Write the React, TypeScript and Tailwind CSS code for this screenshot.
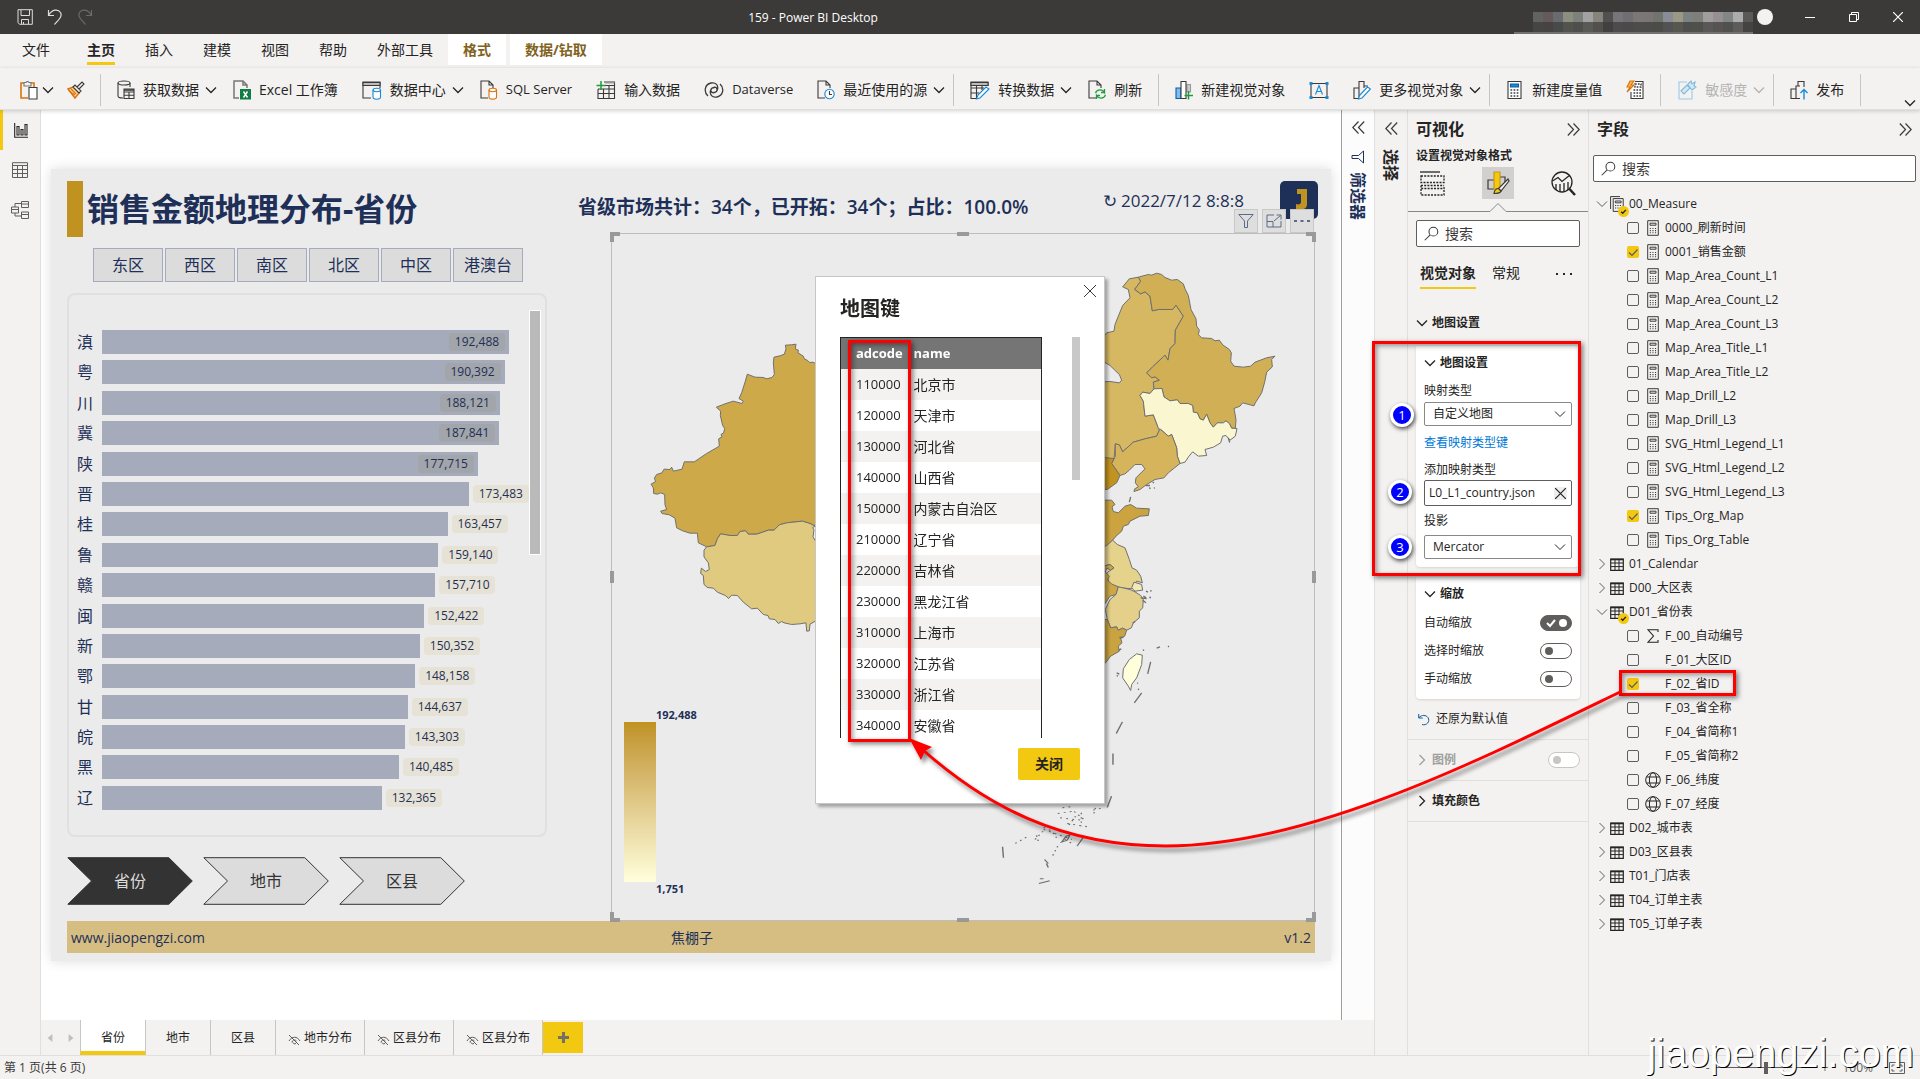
import { useState } from 'react';
import type { ReactNode } from 'react';
import clsx from 'clsx';

/* ---------- data ---------- */

const menuItems = ['插入', '建模', '视图', '帮助', '外部工具'];
const regions = ['东区', '西区', '南区', '北区', '中区', '港澳台'];

const provinces: [string, number][] = [
  ['滇', 192488],
  ['粤', 190392],
  ['川', 188121],
  ['冀', 187841],
  ['陕', 177715],
  ['晋', 173483],
  ['桂', 163457],
  ['鲁', 159140],
  ['赣', 157710],
  ['闽', 152422],
  ['新', 150352],
  ['鄂', 148158],
  ['甘', 144637],
  ['皖', 143303],
  ['黑', 140485],
  ['辽', 132365],
];

const mapKeys = [
  ['110000', '北京市'],
  ['120000', '天津市'],
  ['130000', '河北省'],
  ['140000', '山西省'],
  ['150000', '内蒙古自治区'],
  ['210000', '辽宁省'],
  ['220000', '吉林省'],
  ['230000', '黑龙江省'],
  ['310000', '上海市'],
  ['320000', '江苏省'],
  ['330000', '浙江省'],
  ['340000', '安徽省'],
];

type FieldIcon = 'calc' | 'sum' | 'globe' | 'none';

interface Field {
  name: string;
  icon: FieldIcon;
  checked?: boolean;
  highlighted?: boolean;
}

interface FieldTable {
  name: string;
  measure?: boolean;
  open?: boolean;
  fields?: Field[];
}

const tables: FieldTable[] = [
  {
    name: '00_Measure',
    measure: true,
    open: true,
    fields: [
      { name: '0000_刷新时间', icon: 'calc' },
      { name: '0001_销售金额', icon: 'calc', checked: true },
      { name: 'Map_Area_Count_L1', icon: 'calc' },
      { name: 'Map_Area_Count_L2', icon: 'calc' },
      { name: 'Map_Area_Count_L3', icon: 'calc' },
      { name: 'Map_Area_Title_L1', icon: 'calc' },
      { name: 'Map_Area_Title_L2', icon: 'calc' },
      { name: 'Map_Drill_L2', icon: 'calc' },
      { name: 'Map_Drill_L3', icon: 'calc' },
      { name: 'SVG_Html_Legend_L1', icon: 'calc' },
      { name: 'SVG_Html_Legend_L2', icon: 'calc' },
      { name: 'SVG_Html_Legend_L3', icon: 'calc' },
      { name: 'Tips_Org_Map', icon: 'calc', checked: true },
      { name: 'Tips_Org_Table', icon: 'calc' },
    ],
  },
  { name: '01_Calendar' },
  { name: 'D00_大区表' },
  {
    name: 'D01_省份表',
    open: true,
    fields: [
      { name: 'F_00_自动编号', icon: 'sum' },
      { name: 'F_01_大区ID', icon: 'none' },
      { name: 'F_02_省ID', icon: 'none', checked: true, highlighted: true },
      { name: 'F_03_省全称', icon: 'none' },
      { name: 'F_04_省简称1', icon: 'none' },
      { name: 'F_05_省简称2', icon: 'none' },
      { name: 'F_06_纬度', icon: 'globe' },
      { name: 'F_07_经度', icon: 'globe' },
    ],
  },
  { name: 'D02_城市表' },
  { name: 'D03_区县表' },
  { name: 'T01_门店表' },
  { name: 'T04_订单主表' },
  { name: 'T05_订单子表' },
];

/* ---------- icons ---------- */

function Chevron({ dir = 'down', thin, className }: { dir?: 'down' | 'right'; thin?: boolean; className?: string }) {
  return (
    <svg viewBox="0 0 12 12" className={clsx('h-3 w-3 shrink-0', className)} fill="none" stroke="currentColor" strokeWidth={thin ? 1 : 1.3}>
      {dir === 'down' ? <path d="M1 3.5 6 8.5 11 3.5" /> : <path d="M3.5 1 8.5 6 3.5 11" />}
    </svg>
  );
}

function DoubleChevron({ left }: { left?: boolean }) {
  return (
    <svg viewBox="0 0 13 13" className="h-[13px] w-[13px]" fill="none" stroke="#3b3a39" strokeWidth="1.2">
      {left ? <path d="M6.5.5.8 6.5l5.7 6M12.2.5l-5.7 6 5.7 6" /> : <path d="M.8.5l5.7 6-5.7 6M6.5.5l5.7 6-5.7 6" />}
    </svg>
  );
}

function SearchIcon() {
  return (
    <svg viewBox="0 0 16 16" className="h-[15px] w-[15px] shrink-0" fill="none" stroke="#3b3a39" strokeWidth="1.1">
      <circle cx="10" cy="6" r="4.7" />
      <path d="M6.6 9.4.8 15.2" />
    </svg>
  );
}

function CalcIcon() {
  return (
    <svg viewBox="0 0 12 16" className="h-4 w-3" fill="none" stroke="#3b3a39">
      <path d="M.7.7h10.6v14.6H.7z" />
      <path d="M3 3.2h6v2H3z" />
      <path d="M2.8 8.5h6.8M2.8 10.6h6.8M2.8 12.7h6.8" strokeWidth="1.1" strokeDasharray="1.1 1.5" />
    </svg>
  );
}

function TableIcon() {
  return (
    <svg viewBox="0 0 14 13" className="h-[13px] w-[14px]" fill="none" stroke="#252423">
      <path d="M.7 1h12.6v11.3H.7z" strokeWidth="1.2" />
      <path d="M.5 1.5h13" strokeWidth="1.6" />
      <path d="M1 5h12M1 8.6h12M5 2v10M9 2v10" />
    </svg>
  );
}

function MeasureTableIcon() {
  return (
    <svg viewBox="0 0 14 16" className="h-4 w-[14px]" fill="none" stroke="#3b3a39">
      <path d="M.6 13V.6H10" />
      <path d="M3.2 2.6h10v12.8h-10z" fill="#f3f2f1" />
      <path d="M5.3 5h5.8v1.8H5.3z" />
      <path d="M5 9.5h6.5M5 12h6.5" strokeDasharray="1.2 1.2" />
    </svg>
  );
}

function CheckBadge() {
  return (
    <svg viewBox="0 0 12 12" className="absolute -right-[5px] -bottom-[5px] h-[11px] w-[11px]">
      <circle cx="6" cy="6" r="6" fill="#f2c811" />
      <path d="M3.4 6.2 5.2 8l3.4-3.8" fill="none" stroke="#252423" strokeWidth="1.5" />
    </svg>
  );
}

function GlobeIcon() {
  return (
    <svg viewBox="0 0 16 16" className="h-4 w-4" fill="none" stroke="#252423">
      <circle cx="8" cy="8" r="7.3" />
      <ellipse cx="8" cy="8" rx="3.6" ry="7.3" />
      <path d="M1.5 5h13M1.5 11h13" />
    </svg>
  );
}

function SumIcon() {
  return (
    <svg viewBox="0 0 12 14" className="h-[14px] w-3" fill="none" stroke="#252423" strokeWidth="1.1">
      <path d="M11 3V.8H1l5.5 6.2L1 13.2h10V11" />
    </svg>
  );
}

function Glyph({ children, wide }: { children: ReactNode; wide?: boolean }) {
  return (
    <svg viewBox={wide ? '0 0 20 20' : '0 0 18 20'} className={clsx('h-5 shrink-0', wide ? 'w-5' : 'w-[18px]')} fill="none" stroke="#3b3a39" strokeWidth="1.1">
      {children}
    </svg>
  );
}

const pageOutline = <path d="M8 18H1V1h8l4 4v3M9 1v4h4" />;

const icons = {
  paste: (
    <Glyph>
      <path d="M4 3H1v15h7M10 3h4v4" stroke="#d9730d" strokeWidth="1.6" />
      <path d="M4 2.5h2a1.6 1.6 0 0 1 3 0h2V6H4z" stroke="#777" fill="#f3f2f1" />
      <path d="M9 7.5h8V19H9z" fill="#fff" />
    </Glyph>
  ),
  brush: (
    <Glyph wide>
      <path d="m2 9 5-2 6 6-4 5z" fill="#ffd59a" stroke="#d9730d" strokeWidth="1.4" />
      <path d="m3 11 6 4M5 9l5 5" stroke="#d9730d" />
      <path d="m7 7 2-2 6 6-2 2zM11 7l5-5 2 2-5 5" fill="#f3f2f1" />
    </Glyph>
  ),
  getData: (
    <Glyph>
      <ellipse cx="7" cy="3" rx="6" ry="2" />
      <path d="M1 3v13c0 1 2 2 5 2M13 3v4" />
      <path d="M7 9h10v9.5H7zM7 12h10M7 15.2h10M12 12v6.5" />
      <path d="M7 10h10" strokeWidth="1.6" />
    </Glyph>
  ),
  excel: (
    <Glyph>
      <path d="M6 18H1V1h9l4 4v3M10 1v4h4" stroke="#777" strokeWidth="1.5" />
      <path d="M7 9h11v10.5H7z" fill="#107c41" stroke="none" />
      <path d="m10.5 11.5 4 6M14.5 11.5l-4 6" stroke="#fff" strokeWidth="1.4" />
    </Glyph>
  ),
  dataHub: (
    <Glyph wide>
      <path d="M9 18H1V2h17v6" />
      <path d="M1 2.5h17v3H1z" fill="#bbb" />
      <path d="M11 10v7c0 3 7.5 3 7.5 0v-7" fill="#fff" stroke="#1a8ad4" />
      <ellipse cx="14.8" cy="10" rx="3.7" ry="1.7" fill="#fff" stroke="#1a8ad4" />
    </Glyph>
  ),
  sql: (
    <Glyph>
      {pageOutline}
      <path d="M9 10v7c0 2.8 7.5 2.8 7.5 0v-7" fill="#fff" stroke="#d9730d" />
      <ellipse cx="12.8" cy="10" rx="3.7" ry="1.7" fill="#fff" stroke="#d9730d" />
    </Glyph>
  ),
  enterData: (
    <Glyph wide>
      <path d="M8 2h10.5v16.5H2V9M2 9h16.5M2 13.5h16.5M7.5 9v9.5M13 6v12.5M8 5.5h10.5" />
      <path d="M9 2.5h9.5" stroke="#999" strokeWidth="2" />
      <path d="M5 1v9M.5 5.5h9" stroke="#1f9d3c" strokeWidth="1.5" />
    </Glyph>
  ),
  dataverse: (
    <Glyph wide>
      <path
        d="M4 16C-.5 12 .5 4.500 7 3c5-1 7.500 2.500 6.500 6.500-.800 3.500-5.500 4.500-6.500 1.500C6.500 8.500 8.500 7 10.500 8M16 4c4.500 4 3.500 11.500-3 13-5 1-7.500-2.500-6.500-6.500.800-3.500 5.500-4.500 6.500-1.500.5 2.500-1.500 4-3.500 3"
        strokeWidth="1.300"
      />
    </Glyph>
  ),
  recent: (
    <Glyph>
      {pageOutline}
      <circle cx="12.5" cy="14" r="4.7" fill="#fff" stroke="#1a8ad4" />
      <path d="M12.5 11v3.5H15" />
    </Glyph>
  ),
  transform: (
    <Glyph wide>
      <path d="M7 18.5H1V2h17v4M1 8h13M1 13h8M6.5 5v13M12 5v5" />
      <path d="M1 2.5h17v3H1z" fill="#bbb" />
      <path d="m8 15 8-8 3 2-9 9-3.5 1z" fill="#fff" stroke="#1a8ad4" />
    </Glyph>
  ),
  refresh: (
    <Glyph>
      {pageOutline}
      <path d="M7.5 13c1.5-4 7-4 9-.5V9M17.5 15c-1.5 4-7 4-9 .5V19M16.5 12.5H13M8.5 15.5H12" stroke="#1f9d3c" strokeWidth="1.3" />
    </Glyph>
  ),
  newVisual: (
    <Glyph>
      <path d="M1 8h5v10.5H1z" fill="#7fbcf0" stroke="#0a5ea8" />
      <path d="M12 4.5h3.5V12H12z" fill="#ccc" stroke="#999" />
      <path d="M6 1.5h5v17H6z" fill="#fff" />
      <path d="M13.5 11v8.5M9.5 15.5H18" stroke="#1f9d3c" strokeWidth="1.5" />
    </Glyph>
  ),
  textBox: (
    <Glyph wide>
      <path d="M2 3.5h16v14H2z" />
      <path d="M.5 2h3v3h-3zM16.5 2h3v3h-3zM.5 16h3v3h-3zM16.5 16h3v3h-3z" fill="#1a8ad4" stroke="none" />
      <path d="m6.5 14.5 3.5-9 3.5 9M7.8 11.5h4.5" stroke="#1a8ad4" />
    </Glyph>
  ),
  moreVisuals: (
    <Glyph>
      <path d="M6 18.5H1V8h5M6 18V1.5h5V8M11 6h4" />
      <path d="m6.5 15.5 8-8.5 3 2-8.5 9-3.5 1z" fill="#fff" stroke="#1a8ad4" />
    </Glyph>
  ),
  newMeasure: (
    <Glyph>
      <path d="M2 1.5h13v17H2z" fill="#fff" />
      <path d="M4.5 4h8v3h-8z" fill="#1a8ad4" stroke="#0a5ea8" />
      <path d="M4.5 10h8M4.5 13h8M4.5 16h8" strokeWidth="1.7" strokeDasharray="1.7 1.4" />
    </Glyph>
  ),
  quickMeasure: (
    <Glyph>
      <path d="M9 1.5h8v17H5V12" fill="#fff" />
      <path d="M9 4h6v3H9zM7.5 10h8M7.5 13h8M7.5 16h8" strokeWidth="1.4" strokeDasharray="1.7 1.2" />
      <path d="m4 1-3 6h3l-3 5 7-7H5l3-4z" fill="#ffb34d" stroke="#d9730d" />
    </Glyph>
  ),
  sensitivity: (
    <Glyph wide>
      <path d="M10 2H2v17h13v-8" stroke="#9cc9e6" />
      <path d="m4 11 6-6 3 3-6 6zM11 4l3-3 1 3 3-2-1 4 2 1-4 3-4-5z" stroke="#7fb9dc" fill="#d5e8f4" />
    </Glyph>
  ),
  publish: (
    <Glyph>
      <path d="M10 18.5H1V9h5M6 18V6h4M8 6V1.5h6V7" />
      <path d="M14 19.5v-10M10.5 13 14 9.5l3.5 3.5" stroke="#1a8ad4" strokeWidth="1.4" />
    </Glyph>
  ),
};

/* ---------- window chrome ---------- */

const blurColors = [
  'bg-[#5f6462]',
  'bg-[#655a59]',
  'bg-[#686c70]',
  'bg-[#8c8f80]',
  'bg-[#7c827b]',
  'bg-[#a0a3a2]',
  'bg-[#86847b]',
  'bg-[#4f504f]',
  'bg-[#777577]',
  'bg-[#716d74]',
  'bg-[#7b7777]',
  'bg-[#7b7675]',
  'bg-[#71736d]',
  'bg-[#898c95]',
  'bg-[#9a9a84]',
  'bg-[#7c8280]',
  'bg-[#7e7f79]',
  'bg-[#a09d9e]',
  'bg-[#988f93]',
  'bg-[#828686]',
  'bg-[#abacab]',
  'bg-[#5a5959]',
];

function TitleBar() {
  return (
    <header className="flex h-[34px] shrink-0 items-center justify-between bg-[#3b3a38] text-white">
      <div className="flex w-[112px] items-center gap-3.5 pl-[17px]">
        <button aria-label="保存">
          <svg viewBox="0 0 16 16" className="h-4 w-4" fill="none" stroke="#ddd">
            <path d="M1 .7h14.3v14.6H2.5L1 13.5zM4 1v5.5h8.5V1M4.5 15v-4.5h7V15M6.5 13v2" />
          </svg>
        </button>
        <button aria-label="撤消">
          <svg viewBox="0 0 16 16" className="h-4 w-4" fill="none" stroke="#ddd" strokeWidth="1.2">
            <path d="M1.5 1v5.5H7M1.8 6C5 .5 11-.5 13.500 3.500c2 3.500-1 6.500-6 12" />
          </svg>
        </button>
        <button aria-label="恢复">
          <svg viewBox="0 0 16 16" className="h-4 w-4" fill="none" stroke="#6b6a68" strokeWidth="1.2">
            <path d="M14.5 1v5.5H9M14.2 6C11 .5 5-.5 2.500 3.500c-2 3.500 1 6.500 6 12" />
          </svg>
        </button>
      </div>
      <h1 className="pt-0.5 text-[12px]">159 - Power BI Desktop</h1>
      <div className="flex h-full items-center">
        <div className="flex h-full w-[239px] flex-col justify-end border-b-2 border-[#737270] pl-[19px]">
          <div className="flex">
            {blurColors.map((c) => (
              <span key={c} className={clsx('h-2.5 w-2.5', c)} />
            ))}
          </div>
          <div className="flex opacity-30">
            {blurColors.map((c) => (
              <span key={c} className={clsx('h-2.5 w-2.5', c)} />
            ))}
          </div>
        </div>
        <span className="ml-1 h-4 w-4 rounded-full bg-[#f3f2f1]" />
        <div className="flex items-center gap-[34px] pr-[17px] pl-8">
          <button aria-label="最小化" className="h-px w-2.5 bg-white" />
          <button aria-label="还原">
            <svg viewBox="0 0 10 10" className="h-2.5 w-2.5" fill="none" stroke="#fff">
              <path d="M.5 2.5h7v7h-7zM2.5 2.5v-2h7v7h-2" />
            </svg>
          </button>
          <button aria-label="关闭窗口">
            <svg viewBox="0 0 10 10" className="h-2.5 w-2.5" stroke="#fff" strokeWidth="1.2">
              <path d="m0 0 10 10M10 0 0 10" />
            </svg>
          </button>
        </div>
      </div>
    </header>
  );
}

function MenuBar() {
  return (
    <nav className="flex h-[34px] shrink-0 items-start text-[14px] leading-8">
      <button className="ml-[22px]">文件</button>
      <button className="mr-[15px] ml-[37px] h-[31px] border-b-[3px] border-[#f2c811] font-bold">主页</button>
      {menuItems.map((item) => (
        <button key={item} className="px-[15px]">
          {item}
        </button>
      ))}
      <button className="h-[31px] bg-white px-[15px] font-bold text-[#80631d]">格式</button>
      <button className="ml-1 h-[31px] bg-white px-[15px] font-bold text-[#80631d]">数据/钻取</button>
    </nav>
  );
}

interface ToolProps {
  icon: ReactNode;
  label?: string;
  title?: string;
  menu?: boolean;
  disabled?: boolean;
  latin?: boolean;
}

function Tool({ icon, label, title, menu, disabled, latin }: ToolProps) {
  return (
    <button
      aria-label={title}
      disabled={disabled}
      className={clsx('flex shrink-0 items-center', menu ? 'mr-4' : 'mr-6', disabled && 'text-[#b5b3b1]')}
    >
      {icon}
      {label && <span className={clsx('ml-2 whitespace-nowrap', latin ? 'text-[13px]' : 'text-[14px]')}>{label}</span>}
      {menu && <Chevron className="ml-1.5" />}
    </button>
  );
}

function ToolGroup({ children }: { children: ReactNode }) {
  return (
    <div className="flex h-8 items-center border-r border-[#c8c6c4] pl-4">
      <div className="-mr-2 flex items-center">{children}</div>
    </div>
  );
}

function Toolbar() {
  return (
    <div className="z-10 flex h-[42px] shrink-0 items-center overflow-hidden border-b border-[#e1dfdd] pt-0.5 shadow-[0_1px_4px_rgba(0,0,0,0.18)]">
      <div className="flex h-8 items-center border-r border-[#c8c6c4] pr-3.5 pl-5">
        <button aria-label="粘贴" className="flex items-center">
          {icons.paste}
          <Chevron className="ml-1" />
        </button>
        <button aria-label="格式刷" className="ml-3">
          {icons.brush}
        </button>
      </div>
      <ToolGroup>
        <Tool icon={icons.getData} label="获取数据" menu />
        <Tool icon={icons.excel} label="Excel 工作簿" />
        <Tool icon={icons.dataHub} label="数据中心" menu />
        <Tool icon={icons.sql} label="SQL Server" latin />
        <Tool icon={icons.enterData} label="输入数据" />
        <Tool icon={icons.dataverse} label="Dataverse" latin />
        <Tool icon={icons.recent} label="最近使用的源" menu />
      </ToolGroup>
      <ToolGroup>
        <Tool icon={icons.transform} label="转换数据" menu />
        <Tool icon={icons.refresh} label="刷新" />
      </ToolGroup>
      <ToolGroup>
        <Tool icon={icons.newVisual} label="新建视觉对象" />
        <Tool icon={icons.textBox} title="文本框" />
        <Tool icon={icons.moreVisuals} label="更多视觉对象" menu />
      </ToolGroup>
      <ToolGroup>
        <Tool icon={icons.newMeasure} label="新建度量值" />
        <Tool icon={icons.quickMeasure} title="快度量值" />
      </ToolGroup>
      <ToolGroup>
        <Tool icon={icons.sensitivity} label="敏感度" menu disabled />
      </ToolGroup>
      <ToolGroup>
        <Tool icon={icons.publish} label="发布" />
      </ToolGroup>
      <button aria-label="折叠功能区" className="mt-auto mr-1 ml-auto">
        <Chevron />
      </button>
    </div>
  );
}

function ViewRail() {
  return (
    <aside className="flex w-[41px] shrink-0 flex-col border-r border-[#e1dfdd]">
      <button aria-label="报表视图" className="flex h-10 items-center border-l-[3px] border-[#f2c811] pl-[11px]">
        <svg viewBox="0 0 15 15" className="h-[15px] w-[15px]" fill="none" stroke="#252423" strokeWidth="1.1">
          <path d="M.7 0v14.3H14M3 3.5h2V12H3zM7 6.5h2V12H7zM11 1.5h2V12h-2z" />
        </svg>
      </button>
      <button aria-label="数据视图" className="flex h-10 items-center justify-center">
        <svg viewBox="0 0 16 16" className="h-4 w-4" fill="none" stroke="#605e5c">
          <path d="M.5.7h15v14.8H.5zM.5 3.5h15M.5 7.5h15M.5 11.5h15M5.5 3.5v12M10.5 3.5v12" />
        </svg>
      </button>
      <button aria-label="模型视图" className="flex h-10 items-center justify-center">
        <svg viewBox="0 0 18 18" className="h-[18px] w-[18px]" fill="none" stroke="#605e5c">
          <path d="M.5 6h7v6h-7zM.5 8.5h7M10.5.5h7v6h-7zM10.5 3h7M10.5 11h7v6.5h-7zM10.5 13.5h7M4 6V2.5h6.5M4 12v3h6.5" />
        </svg>
      </button>
    </aside>
  );
}

/* ---------- report page ---------- */

function BarChart() {
  const max = provinces[0][1];
  return (
    <div className="mt-[11px] flex h-[544px] w-[480px] rounded-lg border-2 border-[#e0e0e0] pt-[35px] pl-2">
      <ul className="flex h-[480px] flex-1 flex-col justify-between text-[#1e3058]">
        {provinces.map(([name, value]) => {
          const inside = value > 175000;
          const badge = (
            <span
              className={clsx(
                'mx-1 w-14 shrink-0 rounded text-center text-[12px] leading-[18px]',
                inside ? 'bg-[#a2a5aa]' : 'bg-[#e6e2d5]',
              )}
            >
              {value.toLocaleString('en-US')}
            </span>
          );
          return (
            <li key={name} className="flex h-6 items-center">
              <span className="w-[25px] shrink-0 text-[16px] leading-6">{name}</span>
              <div className="flex w-[407px] shrink-0 items-center">
                <div
                  className="flex h-6 shrink-0 items-center justify-end bg-[#a5abba]"
                  style={{ width: `${(value / max) * 100}%` }}
                >
                  {inside && badge}
                </div>
                {!inside && badge}
              </div>
            </li>
          );
        })}
      </ul>
      <div className="-mt-5 mr-1 h-[245px] w-3 shrink-0 border border-white bg-[#bababa]" />
    </div>
  );
}

function StepArrow({ label, active }: { label: string; active?: boolean }) {
  return (
    <button className="relative h-12 w-[126px]">
      <svg viewBox="0 0 126 48" className="absolute inset-0 h-full w-full">
        <path d="M.8.7h101L125.300 24l-23.500 23.300H.8L24.500 24z" fill={active ? '#333' : '#dcdcdc'} stroke="#333" />
      </svg>
      <span className={clsx('relative text-[16px]', active ? 'text-[#dcdcdc]' : 'text-[#333]')}>{label}</span>
    </button>
  );
}

const xinjiangSouth =
  '200 652 225 648 232 628 242 613 270 618 292 618 300 606 317 604 325 614 350 614 385 602 402 602 418 586 440 580 487 575 510 582 526 590';

function ChinaMap() {
  return (
    <svg viewBox="612 235 702 685" className="absolute inset-0 h-full w-full">
      <g stroke="#6f6f6f" strokeWidth="3" strokeLinejoin="round" transform="translate(640 330) scale(.33333)">
        <path
          fill="#cda94a"
          d={`M540 106 526 102 519 98 509 99 503 93 493 88 490 80 474 70 475 62 466 58 468 44 454 46 436 47 438 58 433 74 420 79 402 83 400 100 403 135 396 144 380 148 370 144 345 143 322 134 316 155 305 190 297 207 310 215 306 222 280 215 258 222 229 233 242 245 241 258 248 288 254 297 251 310 243 315 246 322 236 328 238 350 200 372 163 397 133 397 126 419 100 425 95 413 90 420 72 419 66 430 50 435 43 446 47 456 33 464 40 475 41 492 52 494 62 490 74 495 75 526 80 540 62 545 66 552 88 556 105 566 110 595 128 604 150 611 172 611 175 640 ${xinjiangSouth} 540 590Z`}
        />
        <path
          fill="#dfca80"
          d={`M${xinjiangSouth} 518 594 522 602 519 622 526 634 540 640 540 872 526 875 510 884 508 904 500 905 498 880 480 883 455 885 432 880 425 876 415 882 405 870 388 868 384 858 370 855 352 836 335 838 310 818 292 798 275 797 266 807 256 798 232 788 220 776 202 774 192 765 190 738 182 732 184 716 197 726 208 720 205 700 192 682 192 662Z`}
        />
      </g>
      <g stroke="#6f6f6f" strokeWidth="3" strokeLinejoin="round" transform="translate(1090 260) scale(.33333)">
        <path
          fill="#d6b862"
          d="M40 228 46 226 50 220 72 215 75 195 98 138 120 115 115 90 98 82 118 58 145 53 152 65 134 90 152 103 165 97 180 110 187 154 205 150 248 150 258 137 280 170 256 212 255 252 240 268 234 302 225 287 188 322 170 340 185 355 195 352 208 362 190 368 192 388 180 402 158 398 150 408 160 425 165 470 190 466 203 500 208 512 200 530 165 538 130 548 98 577 88 556 76 553 72 600 40 594Z"
        />
        <path fill="#ebebeb" d="M40 306 60 318 88 345 95 362 88 370 60 366 40 367Z" />
        <path
          fill="#d0af55"
          d="M145 53 175 45 185 47 200 41 215 45 225 54 245 62 262 60 280 73 285 88 295 108 303 150 318 178 320 200 328 212 325 225 335 235 365 237 375 244 388 242 398 256 418 270 424 280 422 305 432 320 460 323 482 320 495 308 530 295 555 290 545 300 547 322 530 338 524 368 515 400 496 430 492 439 458 430 450 440 432 447 438 480 436 507 425 506 418 492 408 484 400 490 382 490 370 503 360 490 350 464 340 482 330 478 322 460 310 458 308 438 295 432 270 432 262 421 240 424 222 412 216 387 192 388 190 368 208 362 195 352 185 355 170 340 188 322 225 287 234 302 240 268 255 252 256 212 280 170 258 137 248 150 205 150 187 154 180 110 165 97 152 103 134 90 152 65Z"
        />
        <path
          fill="#faf6d0"
          d="M158 398 180 402 192 388 216 387 222 412 240 424 262 421 270 432 295 432 308 438 310 458 322 460 330 478 340 482 350 464 360 490 370 503 382 490 400 490 408 484 418 492 425 506 441 507 436 530 420 542 408 528 398 530 392 550 370 563 345 570 350 588 325 590 308 577 297 590 285 608 270 612 262 590 260 565 245 525 235 530 212 510 205 507 203 500 190 466 165 470 160 425 150 408Z"
        />
        <path
          fill="#d5b45c"
          d="M208 512 212 510 235 530 245 525 260 565 262 590 270 612 235 640 222 655 195 660 170 675 150 690 132 696 134 688 145 682 136 670 138 655 165 628 155 615 135 615 118 632 105 643 90 648 65 612 76 590 76 553 88 556 98 577 130 548 165 538 200 530Z"
        />
        <path fill="#c39320" d="M40 594 72 597 65 612 90 648 80 670 52 690 40 690Z" />
        <path
          fill="#cba43f"
          d="M40 722 65 722 75 735 66 742 70 756 85 760 105 740 122 735 140 746 178 748 175 768 150 770 120 785 115 795 100 800 95 815 78 830 68 842 50 860 40 862Z"
        />
        <path
          fill="#e5d28b"
          d="M40 862 50 858 68 842 82 855 105 865 118 900 126 925 140 932 152 950 157 970 140 965 125 988 95 985 58 975 50 940 72 925 60 915 40 920Z"
        />
        <path fill="#cda745" d="M40 920 60 915 72 925 62 932 50 926 46 938 58 950 52 962 66 974 85 982 78 1005 60 1010 40 1040Z" />
        <path fill="#f3e9b4" d="M132 968 155 975 158 992 135 995 125 985Z" />
        <path
          fill="#e4d08a"
          d="M85 982 120 990 135 997 152 1008 160 1020 158 1045 148 1055 148 1075 130 1090 124 1105 110 1112 98 1106 85 1112 80 1102 62 1105 52 1080 46 1050 60 1020 78 1005Z"
        />
        <path fill="#c9a33f" d="M40 1080 52 1080 62 1105 80 1102 85 1112 98 1106 110 1112 104 1130 92 1136 96 1150 85 1160 88 1175 62 1190 45 1212 40 1212Z" />
        <path fill="#ffffdc" d="M140 1183 157 1187 155 1215 140 1255 125 1275 122 1293 115 1280 98 1255 100 1228 118 1200Z" />
        <path
          fill="none"
          strokeWidth="4"
          d="M182 1207 173 1243M155 1300 133 1330M168 678l12 0M178 684l3 4M192 684l2 3M188 668l4 2M122 712l-4 16M415 535l4 14M168 995l6 3M180 994l5 0M178 1014l5 0M152 1015l18 2M158 1022l10 8M160 1010l8 4M80 1240l8 4M80 1248l4 2M200 1166l10-4M234 1160l3 2M160 1170l1 4M142 1270l2 2M144 1288l3 3M128 1090l8-4M86 1172l8-4M88 1134l12 0"
        />
      </g>
      {/* islands and dashes of the south sea */}
      <g stroke="#6f6f6f" strokeWidth="3" fill="none" transform="translate(600 600) scale(.4719 .3333)">
        <path d="M1107 367 1094 402M1087 462v34M1084 590 1075 624M1026 710 1011 740M853 742 855 775M930 852 953 844M932 838l8 0M942 780l8 12M946 792l4 12" />
        <path d="M978 728l10-18 8-4-6 16z" />
        <path
          strokeDasharray="4 9"
          d="M980 625l20-4M1045 632l18-6M970 642l30-6M1005 636l22 26M975 655l50 8M990 672l44 10M880 732l30-24M922 720l20-30M940 690l60 30M960 700l10 20M1008 650l-16 30M1020 640l0 40M1050 625l-4 20M970 740l-12 32M895 610l-2 4M985 720l20 16M940 684l20 12M925 708l4 18"
        />
      </g>
    </svg>
  );
}

const visualButton = 'flex h-6 w-6 items-center justify-center border border-[#c8c8c8] bg-[#dedede]';

function MapVisual() {
  return (
    <section aria-label="形状地图" className="relative ml-[39px] flex flex-1 items-end border border-[#bdbdbd]">
      <ChinaMap />
      <div className="relative mb-6 ml-3 text-[11px] leading-[14px] font-bold text-[#1e3058]">
        <p className="pl-8">192,488</p>
        <div className="h-40 w-8 bg-linear-to-b from-[#c0921f] to-[#ffffdc]" />
        <p className="pl-8">1,751</p>
      </div>
      <div className="absolute -top-[25px] right-0 flex gap-1">
        <button aria-label="筛选器" className={visualButton}>
          <svg viewBox="0 0 16 16" className="h-4 w-4" fill="none" stroke="#5d6a87">
            <path d="M.8 1.5h14.4L9.5 8v6.5h-3V8z" />
          </svg>
        </button>
        <button aria-label="焦点模式" className={visualButton}>
          <svg viewBox="0 0 16 16" className="h-4 w-4" fill="none" stroke="#5d6a87">
            <path d="M8 2H1v12h14V8M1 8.5h6V14M8 8l6.5-5.500M10.500 2H15v4.500" />
          </svg>
        </button>
        <button aria-label="更多选项" className={visualButton}>
          <svg viewBox="0 0 16 4" className="h-1 w-4" fill="#5d6a87">
            <path d="M0 1h3v2H0zM6.500 1h3v2h-3zM13 1h3v2h-3z" />
          </svg>
        </button>
      </div>
      <span className="absolute -top-0.5 -left-0.5 h-2.5 w-2.5 border-t-4 border-l-4 border-[#999]" />
      <span className="absolute -top-0.5 -right-0.5 h-2.5 w-2.5 border-t-4 border-r-4 border-[#999]" />
      <span className="absolute -bottom-0.5 -left-0.5 h-2.5 w-2.5 border-b-4 border-l-4 border-[#999]" />
      <span className="absolute -right-0.5 -bottom-0.5 h-2.5 w-2.5 border-r-4 border-b-4 border-[#999]" />
      <span className="absolute -top-0.5 left-1/2 h-1 w-3 -translate-x-1/2 bg-[#999]" />
      <span className="absolute -bottom-0.5 left-1/2 h-1 w-3 -translate-x-1/2 bg-[#999]" />
      <span className="absolute top-1/2 -left-0.5 h-3 w-1 -translate-y-1/2 bg-[#999]" />
      <span className="absolute top-1/2 -right-0.5 h-3 w-1 -translate-y-1/2 bg-[#999]" />
    </section>
  );
}

function ReportPage() {
  return (
    <main className="flex min-w-0 flex-1 flex-col bg-white px-2.5 pt-[59px]">
      <div className="flex h-[792px] flex-col bg-[#ebebeb] px-4 py-3 shadow-[0_0_12px_rgba(0,0,0,0.14)]">
        <div className="flex h-[740px] shrink-0">
          <div className="flex w-[505px] shrink-0 flex-col">
            <div className="flex h-14 items-center">
              <span className="h-14 w-4 bg-[#c0921f]" />
              <h2 className="ml-1 text-[32px] leading-[56px] font-bold whitespace-nowrap text-[#1e3058]">销售金额地理分布-省份</h2>
            </div>
            <div className="mt-[11px] ml-[26px] flex gap-0.5">
              {regions.map((r) => (
                <button key={r} className="h-[34px] w-[70px] border border-[#a5abba] bg-[#dcdcdc] text-[16px] text-[#1e3058]">
                  {r}
                </button>
              ))}
            </div>
            <BarChart />
            <div className="mt-5 flex gap-2.5">
              <StepArrow label="省份" active />
              <StepArrow label="地市" />
              <StepArrow label="区县" />
            </div>
          </div>
          <div className="flex min-w-0 flex-1 flex-col text-[#1e3058]">
            <div className="flex h-[52px] shrink-0 items-start">
              <p className="ml-1.5 text-[19px] leading-[52px] font-semibold whitespace-nowrap">
                省级市场共计：34个，已开拓：34个；占比：100.0%
              </p>
              <p className="ml-auto pr-9 text-[17px] leading-10 whitespace-nowrap">↻ 2022/7/12 8:8:8</p>
              <svg viewBox="0 0 38 38" className="mr-[-3px] h-[38px] w-[38px] shrink-0">
                <rect width="38" height="38" rx="5" fill="#1e3058" />
                <path d="M17 8h10v15c0 5-4 6-11 5v-5c3 1 5 0 5-2v-8h-4z" fill="#c0921f" />
              </svg>
            </div>
            <MapVisual />
          </div>
        </div>
        <footer className="flex h-8 shrink-0 items-center justify-between bg-[#d6bd81] px-1 text-[14px] text-[#1e3058]">
          <a href="#site" className="w-[600px]">
            www.jiaopengzi.com
          </a>
          <span className="flex-1">焦棚子</span>
          <span>v1.2</span>
        </footer>
      </div>
    </main>
  );
}

function HiddenIcon() {
  return (
    <svg viewBox="0 0 14 12" className="mt-1 h-3 w-3.5" fill="none" stroke="#605e5c">
      <path d="M1 1l10 10M1 7C4 2 9 2 12 7M4 8.5a2.5 2.5 0 0 1 4.500-1.500M8 9.500a2 2 0 0 1-3-1" />
    </svg>
  );
}

function PageTabs() {
  return (
    <div className="flex h-[35px] items-stretch text-[12px] text-[#252423]">
      <div className="flex w-[39px] items-center justify-between px-1.5">
        <button aria-label="上一页">
          <svg viewBox="0 0 6 10" className="h-2 w-1.5" fill="#c0bebc">
            <path d="M6 0v10L0 5z" />
          </svg>
        </button>
        <button aria-label="下一页">
          <svg viewBox="0 0 6 10" className="h-2 w-1.5" fill="#c0bebc">
            <path d="M0 0v10l6-5z" />
          </svg>
        </button>
      </div>
      <button className="w-[66px] border-r border-b-4 border-l border-[#c8c6c4] border-b-[#f2c811] bg-white pt-1">省份</button>
      <button className="w-[65px] border-r border-[#c8c6c4]">地市</button>
      <button className="w-[65px] border-r border-[#c8c6c4]">区县</button>
      {['地市分布', '区县分布', '区县分布'].map((t, i) => (
        <button key={i} className="flex w-[89px] items-center justify-center gap-0.5 border-r border-[#c8c6c4]">
          <HiddenIcon />
          {t}
        </button>
      ))}
      <button aria-label="新建页" className="my-0.5 flex w-10 items-center justify-center bg-[#f2c811]">
        <svg viewBox="0 0 11 11" className="h-[11px] w-[11px]" stroke="#757065" strokeWidth="3">
          <path d="M5.5 0v11M0 5.5h11" />
        </svg>
      </button>
    </div>
  );
}

/* ---------- side panes ---------- */

function CollapsedPanes() {
  return (
    <>
      <aside className="mb-[35px] flex w-[33px] shrink-0 flex-col items-center border-l border-[#a19f9d] bg-[#fcfcfc] pt-[11px]">
        <button aria-label="展开筛选器">
          <DoubleChevron left />
        </button>
        <svg viewBox="0 0 14 14" className="mt-4 h-3.5 w-3.5" fill="none" stroke="#1e3058">
          <path d="M12.5 1v12L7.500 8.500H1v-3h6.500z" />
        </svg>
        <h2 className="mt-2 text-[16px] leading-5 font-bold text-[#1e3058] [text-orientation:sideways] [writing-mode:vertical-rl]">筛选器</h2>
      </aside>
      <aside className="flex w-[33px] shrink-0 flex-col items-center border-l border-[#e1dfdd] pt-3">
        <button aria-label="展开选择">
          <DoubleChevron left />
        </button>
        <h2 className="mt-3.5 text-[16px] leading-5 font-bold [text-orientation:sideways] [writing-mode:vertical-rl]">选择</h2>
      </aside>
    </>
  );
}

interface SwitchProps {
  label: string;
  checked?: boolean;
  disabled?: boolean;
}

function Switch({ label, checked = false, disabled }: SwitchProps) {
  const [on, setOn] = useState(checked);
  return (
    <span className="relative flex">
      <input
        type="checkbox"
        role="switch"
        aria-label={label}
        checked={on}
        disabled={disabled}
        onChange={() => setOn(!on)}
        className={clsx(
          'h-4 w-8 appearance-none rounded-full border',
          disabled ? 'border-[#c8c6c4]' : 'border-[#605e5c]',
          on ? 'bg-[#605e5c]' : 'bg-white',
        )}
      />
      <svg viewBox="0 0 32 16" className="pointer-events-none absolute inset-0 h-4 w-8">
        {on ? (
          <>
            <path d="M7 8l3 3 5-6" fill="none" stroke="#fff" strokeWidth="2" />
            <circle cx="23" cy="8" r="4" fill="#fff" />
          </>
        ) : (
          <circle cx="9" cy="8" r="4" fill={disabled ? '#c8c6c4' : '#605e5c'} />
        )}
      </svg>
    </span>
  );
}

function ToggleRow({ label, checked }: SwitchProps) {
  return (
    <label className="flex h-7 items-center justify-between">
      {label}
      <Switch label={label} checked={checked} />
    </label>
  );
}

function Dropdown({ id, value }: { id: string; value: string }) {
  return (
    <div className="relative">
      <select id={id} className="h-6 w-full appearance-none rounded-xs border border-[#8a8886] bg-white pr-6 pl-2 text-[12px]">
        <option>{value}</option>
      </select>
      <Chevron thin className="pointer-events-none absolute top-1.5 right-1.5" />
    </div>
  );
}

function StepBadge({ n, className }: { n: number; className: string }) {
  return (
    <span
      className={clsx(
        'absolute flex h-6 w-6 items-center justify-center rounded-full border-[3px] border-white bg-[#0000ff] text-[13px] leading-none text-white shadow-[1px_2px_4px_rgba(0,0,0,0.7)]',
        className,
      )}
    >
      {n}
    </span>
  );
}

const redBox =
  'pointer-events-none absolute border-[3px] border-[#ff0000] shadow-[2px_2px_5px_rgba(0,0,0,0.5),inset_2px_2px_5px_rgba(0,0,0,0.4)]';

function VisualizationPane() {
  return (
    <aside className="flex w-[181px] shrink-0 flex-col border-l border-[#e1dfdd] text-[12px]">
      <div className="px-2">
        <div className="flex h-[38px] items-center justify-between">
          <h2 className="text-[16px] font-bold">可视化</h2>
          <button aria-label="折叠可视化">
            <DoubleChevron />
          </button>
        </div>
        <p className="leading-4 font-semibold">设置视觉对象格式</p>
        <div className="mt-[3px] flex h-8 items-center justify-between">
          <button aria-label="生成视觉对象" className="pl-1">
            <svg viewBox="0 0 25 25" className="h-[25px] w-[25px]" fill="none" stroke="#252423" strokeWidth="1.3">
              <path d="M0 1h20" />
              <path d="M1 5h23v6.500H1zM1 14.500h23M1 14.500V17.500h23v-3M1 18v6h23v-6" strokeDasharray="2 1.2" />
            </svg>
          </button>
          <button aria-label="设置格式" className="flex h-8 w-8 items-center justify-center bg-[#d2d0ce]">
            <svg viewBox="0 0 24 24" className="h-6 w-6" fill="none" stroke="#3b3a39" strokeWidth="1.2">
              <path d="M8 18H2V9h6M14 6h5v5" />
              <path d="M8 1h6v17H8z" fill="#f2c811" stroke="#c79a10" />
              <path d="M22 8 12.5 17.5 15 20l8-10z" fill="#f3f2f1" />
              <path d="M12.5 17.5c-2 0-4 1-4.500 5 4 0 6.500-.5 7-2.500z" fill="#f2c811" />
            </svg>
          </button>
          <button aria-label="分析" className="pr-1">
            <svg viewBox="0 0 25 25" className="h-[25px] w-[25px]" fill="none" stroke="#252423" strokeWidth="1.3">
              <circle cx="11" cy="11" r="10" />
              <path d="M1.500 10 7 6.500l4 4 8-6.500M5 19v-6M9 21v-8M13 21v-9M17 19v-8" />
              <path d="m18.500 18 5.500 6" strokeWidth="2.5" />
            </svg>
          </button>
        </div>
      </div>
      <svg viewBox="0 0 180 13" className="h-[13px] w-full" fill="none" stroke="#8a8886" preserveAspectRatio="none">
        <path d="M0 12.5h82l8-8 8 8h82" />
      </svg>
      <div className="px-2">
        <label className="mt-2 flex h-[27px] items-center rounded-xs border border-[#605e5c] bg-white pl-[7px] text-[14px]">
          <SearchIcon />
          <input aria-label="搜索" placeholder="搜索" className="ml-1.5 w-24 outline-none placeholder:text-[#3b3a39]" />
        </label>
        <div className="mt-[11px] flex h-8 items-start gap-4 pl-1 text-[14px] leading-[30px]">
          <button className="h-[31px] border-b-2 border-[#f2c811] font-bold">视觉对象</button>
          <button>常规</button>
          <button aria-label="更多" className="mt-[15px] mr-2 ml-auto">
            <svg viewBox="0 0 16 2" className="h-0.5 w-4" fill="#252423">
              <path d="M0 0h2v2H0zM7 0h2v2H7zM14 0h2v2h-2z" />
            </svg>
          </button>
        </div>
        <button className="mt-2.5 flex h-[46px] items-center gap-1 font-bold">
          <Chevron />
          地图设置
        </button>
        <section className="relative rounded-b bg-white px-2 pb-2 shadow-sm">
          <h3 className="flex h-[34px] items-center gap-1 font-bold">
            <Chevron />
            地图设置
          </h3>
          <label htmlFor="map-type" className="flex h-[22px] items-center">
            映射类型
          </label>
          <Dropdown id="map-type" value="自定义地图" />
          <a href="#keys" className="flex h-[34px] items-center text-[#0078d4]">
            查看映射类型键
          </a>
          <label htmlFor="map-file" className="flex h-5 items-center">
            添加映射类型
          </label>
          <div className="flex h-[26px] items-center rounded-xs border border-[#605e5c] px-1">
            <input id="map-file" defaultValue="L0_L1_country.json" className="min-w-0 flex-1 text-[12px] outline-none" />
            <button aria-label="清除" className="bg-[#eee] p-px">
              <svg viewBox="0 0 11 11" className="h-[11px] w-[11px]" stroke="#252423" strokeWidth="1.2">
                <path d="m0 0 11 11M11 0 0 11" />
              </svg>
            </button>
          </div>
          <label htmlFor="projection" className="flex h-[29px] items-center">
            投影
          </label>
          <Dropdown id="projection" value="Mercator" />
          <div className={clsx(redBox, '-top-[5px] -right-px h-[235px] w-[209px]')} />
          <StepBadge n={1} className="top-[57px] -left-[26px]" />
          <StepBadge n={2} className="top-[134px] -left-7" />
          <StepBadge n={3} className="top-[189px] -left-7" />
        </section>
        <section className="mt-2.5 rounded-b bg-white px-2 pb-1.5 shadow-sm">
          <h3 className="flex h-8 items-center gap-1 pt-0.5 font-bold">
            <Chevron />
            缩放
          </h3>
          <ToggleRow label="自动缩放" checked />
          <ToggleRow label="选择时缩放" />
          <ToggleRow label="手动缩放" />
        </section>
        <button className="flex h-10 items-center gap-1.5 pl-0.5">
          <svg viewBox="0 0 12 13" className="h-[13px] w-3" fill="none" stroke="#0f5f9e">
            <path d="M.7 1v4h4M1 4.5C4 1.500 8 2 10 4.500c2.500 4-1.500 8.500-6 7" />
          </svg>
          还原为默认值
        </button>
      </div>
      <div className="flex h-[41px] items-center justify-between border-t border-[#e1dfdd] px-2 font-bold text-[#a19f9d]">
        <button className="flex items-center gap-1" disabled>
          <Chevron dir="right" />
          图例
        </button>
        <Switch label="图例" disabled />
      </div>
      <button className="flex h-[42px] items-center gap-1 border-y border-[#e1dfdd] px-2 font-bold">
        <Chevron dir="right" />
        填充颜色
      </button>
    </aside>
  );
}

function FieldRow({ field }: { field: Field }) {
  const [checked, setChecked] = useState(!!field.checked);
  return (
    <li className="relative h-6 pl-[34px]">
      <label className="flex h-6 items-center">
        <span className="relative flex">
          <input
            type="checkbox"
            checked={checked}
            onChange={() => setChecked(!checked)}
            className={clsx('h-3 w-3 appearance-none rounded-xs', checked ? 'bg-[#f2c811]' : 'border border-[#605e5c]')}
          />
          {checked && (
            <svg viewBox="0 0 12 12" className="pointer-events-none absolute inset-0 h-3 w-3" fill="none" stroke="#605e5c" strokeWidth="1.2">
              <path d="m2 6.500 3 3 5.500-6" />
            </svg>
          )}
        </span>
        <span className="mr-0.5 ml-1 flex w-5 justify-center">
          {field.icon === 'calc' && <CalcIcon />}
          {field.icon === 'sum' && <SumIcon />}
          {field.icon === 'globe' && <GlobeIcon />}
        </span>
        {field.name}
      </label>
      {field.highlighted && <div className={clsx(redBox, '-top-0.5 left-[26px] h-[26px] w-[117px]')} />}
    </li>
  );
}

function FieldsPane() {
  return (
    <aside className="flex w-[332px] shrink-0 flex-col border-l border-[#e1dfdd] text-[12px]">
      <div className="flex h-[38px] shrink-0 items-center justify-between px-2">
        <h2 className="text-[16px] font-bold">字段</h2>
        <button aria-label="折叠字段">
          <DoubleChevron />
        </button>
      </div>
      <label className="mx-1 mt-[7px] flex h-[27px] shrink-0 items-center rounded-xs border border-[#605e5c] bg-white pl-[7px] text-[14px]">
        <SearchIcon />
        <input aria-label="搜索" placeholder="搜索" className="ml-1.5 flex-1 outline-none placeholder:text-[#3b3a39]" />
      </label>
      <ul className="mt-2.5 pl-1">
        {tables.map((table) => (
          <li key={table.name}>
            <button className="flex h-6 items-center pl-[3px]">
              <Chevron thin dir={table.open ? 'down' : 'right'} className="text-[#605e5c]" />
              <span className="relative mr-[5px] ml-0.5">
                {table.measure ? <MeasureTableIcon /> : <TableIcon />}
                {table.open && <CheckBadge />}
              </span>
              {table.name}
            </button>
            {table.fields && (
              <ul>
                {table.fields.map((f) => (
                  <FieldRow key={f.name} field={f} />
                ))}
              </ul>
            )}
          </li>
        ))}
      </ul>
    </aside>
  );
}

/* ---------- dialog, status bar, annotations ---------- */

function MapKeyDialog() {
  return (
    <div className="pointer-events-none fixed inset-0 z-20 flex items-center justify-center">
      <div
        role="dialog"
        aria-label="地图键"
        className="pointer-events-auto relative flex h-[528px] w-[290px] flex-col border border-[#c8c6c4] bg-white px-6 shadow-[3px_3px_3px_rgba(0,0,0,0.3)]"
      >
        <h2 className="pt-4 text-[20px] leading-8 font-semibold">地图键</h2>
        <button aria-label="关闭" className="absolute top-2 right-2">
          <svg viewBox="0 0 12 12" className="h-3 w-3" stroke="#3b3a39">
            <path d="m0 0 12 12M12 0 0 12" />
          </svg>
        </button>
        <div className="mt-3 flex h-[401px] justify-between overflow-hidden">
          <table className="h-fit w-[202px] border border-[#252423] text-[14px]">
            <thead>
              <tr className="h-8 bg-[#757575] text-left text-[13px] text-white">
                <th className="w-[67px] pl-[15px]">adcode</th>
                <th className="pl-1.5">name</th>
              </tr>
            </thead>
            <tbody>
              {mapKeys.map(([code, name]) => (
                <tr key={code} className="h-[31px] odd:bg-[#f3f2f1]">
                  <td className="pl-[15px] text-[13px]">{code}</td>
                  <td className="pl-1.5">{name}</td>
                </tr>
              ))}
            </tbody>
          </table>
          <div className="h-[143px] w-2 bg-[#c8c8c8]" />
        </div>
        <button className="mt-2.5 h-8 w-[62px] self-end rounded-xs bg-[#f2c811] text-[14px] font-semibold">关闭</button>
        <div className={clsx(redBox, 'top-[63px] left-8 h-[402px] w-[63px]')} />
      </div>
    </div>
  );
}

function StatusBar() {
  return (
    <footer className="relative flex h-6 shrink-0 items-center justify-between border-t border-[#e1dfdd] pr-[15px] pl-1 text-[12px] text-[#3b3a39]">
      <span>第 1 页(共 6 页)</span>
      <div className="flex items-center text-[#605e5c]">
        <span>-</span>
        <input
          type="range"
          aria-label="缩放"
          className="mx-1.5 h-3 w-[100px] appearance-none bg-[linear-gradient(#605e5c,#605e5c)] bg-[length:100%_1px] bg-center bg-no-repeat [&::-webkit-slider-thumb]:h-3 [&::-webkit-slider-thumb]:w-1 [&::-webkit-slider-thumb]:appearance-none [&::-webkit-slider-thumb]:bg-[#605e5c]"
        />
        <span>+</span>
        <span className="mr-4 ml-3.5">100%</span>
        <svg viewBox="0 0 16 12" className="h-3 w-4" fill="none" stroke="#605e5c">
          <path d="M.5.5h15v11H.5zM3 5V3h2.500M10.500 3H13v2M13 7v2h-2.500M5.500 9H3V7" />
        </svg>
      </div>
      <span className="pointer-events-none absolute right-1.5 bottom-0.5 font-['Liberation_Sans',sans-serif] text-[40px] leading-[48px] text-white [text-shadow:1px_1px_0_#000]">
        jiaopengzi.com
      </span>
    </footer>
  );
}

function LinkArrow() {
  return (
    <svg className="pointer-events-none absolute inset-0 z-30 h-full w-full drop-shadow-[3px_4px_2px_rgba(0,0,0,0.45)]" fill="none">
      <path d="M1620 692C1480 760 1310 846 1166 846 1060 846 985 805 923 750" stroke="#ff0000" strokeWidth="3" />
      <path d="m909 738 23 9-7 4-4 9z" fill="#ff0000" />
    </svg>
  );
}

export default function App() {
  return (
    <div className="relative flex min-h-screen flex-col overflow-hidden bg-[#f3f2f1] font-['Open_Sans','Noto_Sans_CJK_SC',sans-serif] text-[#252423]">
      <TitleBar />
      <MenuBar />
      <Toolbar />
      <div className="flex flex-1">
        <ViewRail />
        <div className="flex min-w-0 flex-1 flex-col">
          <ReportPage />
          <PageTabs />
        </div>
        <CollapsedPanes />
        <VisualizationPane />
        <FieldsPane />
      </div>
      <StatusBar />
      <MapKeyDialog />
      <LinkArrow />
    </div>
  );
}
